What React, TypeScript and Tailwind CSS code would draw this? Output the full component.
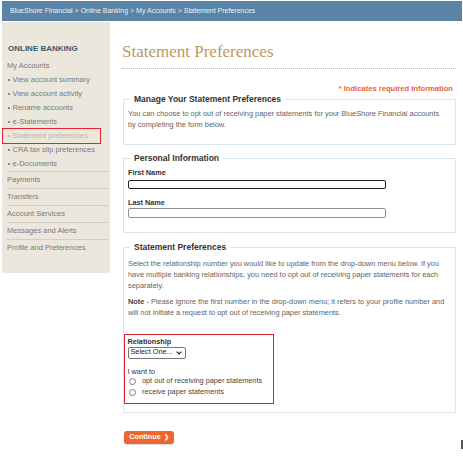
const bullets = [
  "View account summary",
  "View account activity",
  "Rename accounts",
  "e-Statements",
  "Statement preferences",
  "CRA tax slip preferences",
  "e-Documents",
]

const sections = [
  "Payments",
  "Transfers",
  "Account Services",
  "Messages and Alerts",
  "Profile and Preferences",
]

function Sidebar() {
  return (
    <aside className="ml-[2px] w-[108px] h-[251px] shrink-0 bg-[#ece7dc] pl-[5px] pr-[2px] pt-[22px] text-[7.5px] text-[#7a7a7a]">
      <div className="text-[8px] leading-[10px] font-bold text-[#3e596d] pl-[1px]">ONLINE BANKING</div>
      <div className="mt-[5px] h-[14px] leading-[14px]">My Accounts</div>
      {bullets.map((b) =>
        b === "Statement preferences" ? (
          <div
            key={b}
            className="-ml-[5px] -my-[1px] w-[99px] h-[16px] border-[1.5px] border-[#e0262b] pl-[4.5px] flex items-center gap-[2.5px] text-[#b9b4ab]"
          >
            <span className="w-[2px] h-[2px] bg-[#c4bfb6]" />
            <span>{b}</span>
          </div>
        ) : (
          <div key={b} className="h-[14px] pl-[1px] flex items-center gap-[2.5px]">
            <span className="w-[2px] h-[2px] bg-[#8a8a8a]" />
            <span>{b}</span>
          </div>
        )
      )}
      {sections.map((s) => (
        <div key={s} className="h-[17px] flex items-center border-t border-[#d4cec2]">
          {s}
        </div>
      ))}
    </aside>
  )
}

function Legend({ children }: { children: React.ReactNode }) {
  return (
    <legend className="ml-[2px] px-[4px] text-[8.5px] leading-[10px] font-bold text-[#333]">
      {children}
    </legend>
  )
}

function Radio({ label }: { label: string }) {
  return (
    <div className="h-[11px] flex items-center">
      <span className="ml-[1px] w-[7px] h-[7px] rounded-full border border-[#808080] bg-white" />
      <span className="ml-[6.5px] text-[#444]">{label}</span>
    </div>
  )
}

export default function App() {
  return (
    <div className="w-[463px] h-[460px] overflow-hidden bg-white font-['Liberation_Sans',Arial,sans-serif]">
      <div className="ml-[2px] mr-[1px] mt-[1px] h-[20px] bg-[#5b83a5] pl-[8px] flex items-center text-[7px] text-[#edf2f7]">
        BlueShore Financial &gt; Online Banking &gt; My Accounts &gt; Statement Preferences
      </div>

      <div className="mt-[1px] flex">
        <Sidebar />

        <main className="ml-[12px] w-[334px] text-[7.3px] text-[#636363]">
          <h1 className="mt-[20px] pb-[6px] border-b border-dotted border-[#bdbdbd] text-[17px] leading-[20px] text-[#bb9a5f] font-['Liberation_Serif',Georgia,serif]">
            Statement Preferences
          </h1>

          <div className="mt-[15px] pr-[3px] text-right text-[7.6px] leading-[10px] font-bold text-[#e8623d]">
            * Indicates required information
          </div>

          <fieldset className="ml-[1px] border border-[#dbe5ee] px-[4px] pt-[4px] pb-[14px]">
            <Legend>Manage Your Statement Preferences</Legend>
            <p className="text-[7.4px] leading-[11px] whitespace-nowrap">
              You can choose to opt out of receiving paper statements for your BlueShore Financial accounts
              <br />
              by completing the form below.
            </p>
          </fieldset>

          <fieldset className="ml-[1px] mt-[8px] border border-[#dbe5ee] px-[4px] pt-[5px] pb-[14px]">
            <Legend>Personal Information</Legend>
            <div className="leading-[10px] font-bold text-[#333]">First Name</div>
            <div className="mt-[2px] w-[258px] h-[9px] rounded-[2px] border-[1.5px] border-[#1e1e1e] bg-white" />
            <div className="mt-[9px] leading-[10px] font-bold text-[#333]">Last Name</div>
            <div className="w-[258px] h-[10px] rounded-[2px] border border-[#8f8f8f] bg-white" />
          </fieldset>

          <fieldset className="ml-[1px] mt-[9px] border border-[#dbe5ee] px-[4px] pt-[6px] pb-[8.5px]">
            <Legend>Statement Preferences</Legend>
            <p className="text-[7.4px] leading-[11px] whitespace-nowrap">
              Select the relationship number you would like to update from the drop-down menu below. If you
              <br />
              have multiple banking relationships, you need to opt out of receiving paper statements for each
              <br />
              separately.
            </p>
            <p className="mt-[5px] text-[7.4px] leading-[11px] whitespace-nowrap">
              <b className="font-bold text-[#444]">Note</b> - Please ignore the first number in the
              drop-down menu; it refers to your profile number and
              <br />
              will not initiate a request to opt out of receiving paper statements.
            </p>

            <div className="-ml-[4px] mt-[16px] w-[150px] border-[1.5px] border-[#d9262c] pl-[2.5px] pt-[1.5px] pb-[5px]">
              <div className="leading-[10px] font-bold text-[#333]">Relationship</div>
              <div className="w-[58px] h-[12px] rounded-[2px] border border-[#767676] bg-white pl-[2px] pr-[3px] flex items-center justify-between text-[#222]">
                <span>Select One...</span>
                <svg width="6" height="4" viewBox="0 0 6 4" fill="none">
                  <path d="M0.7 0.7 L3 3 L5.3 0.7" stroke="#222" strokeWidth="1.2" />
                </svg>
              </div>
              <div className="mt-[8px] leading-[9px] text-[#333]">I want to</div>
              <Radio label="opt out of receiving paper statements" />
              <Radio label="receive paper statements" />
            </div>
          </fieldset>

          <div className="mt-[18px] -mr-[7px] flex items-start justify-between">
            <button className="ml-[2px] w-[50px] h-[13px] rounded-[3px] bg-[#f0652f] text-white text-[7.3px] font-bold flex items-center justify-center gap-[3px] shadow-[0_1px_1px_rgba(0,0,0,0.15)]">
              Continue <span className="text-[6px]">❯</span>
            </button>
            <span className="mt-[9px] w-[2px] h-[9px] bg-[#555]" />
          </div>
        </main>
      </div>
    </div>
  )
}
